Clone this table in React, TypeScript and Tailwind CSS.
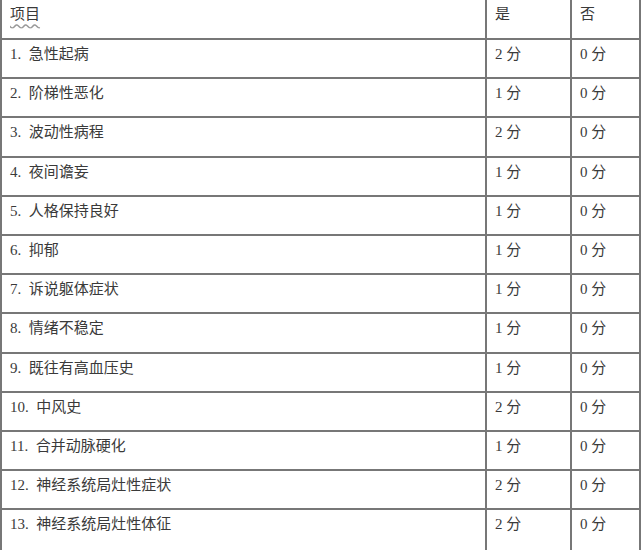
const rows = [
  ["1.  急性起病", "2 分", "0 分"],
  ["2.  阶梯性恶化", "1 分", "0 分"],
  ["3.  波动性病程", "2 分", "0 分"],
  ["4.  夜间谵妄", "1 分", "0 分"],
  ["5.  人格保持良好", "1 分", "0 分"],
  ["6.  抑郁", "1 分", "0 分"],
  ["7.  诉说躯体症状", "1 分", "0 分"],
  ["8.  情绪不稳定", "1 分", "0 分"],
  ["9.  既往有高血压史", "1 分", "0 分"],
  ["10.  中风史", "2 分", "0 分"],
  ["11.  合并动脉硬化", "1 分", "0 分"],
  ["12.  神经系统局灶性症状", "2 分", "0 分"],
  ["13.  神经系统局灶性体征", "2 分", "0 分"],
];

const font = "font-['Liberation_Serif','Noto_Sans_CJK_SC',serif]";

export default function App() {
  return (
    <div className={`w-[641px] h-[550px] overflow-hidden bg-white text-[15px] text-[#3a3a3a] ${font}`}>
      <div className="grid grid-cols-[483px_85px_71px] border-l-2 border-[#777] h-[40px] border-b-2">
        <div className="pl-2 pt-[3px]">
          <span className="underline decoration-wavy decoration-[#999] underline-offset-4">项目</span>
        </div>
        <div className="border-l-2 border-[#777] pl-2 pt-[3px]">是</div>
        <div className="border-l-2 border-r-2 border-[#777] pl-2 pt-[3px]">否</div>
      </div>
      {rows.map((r, i) => (
        <div
          key={i}
          className="grid grid-cols-[483px_85px_71px] border-l-2 border-b-2 border-[#777] h-[39.2px] last:h-[45px]"
        >
          <div className="pl-2 pt-[3px] whitespace-pre">{r[0]}</div>
          <div className="border-l-2 border-[#777] pl-2 pt-[3px]">{r[1]}</div>
          <div className="border-l-2 border-r-2 border-[#777] pl-2 pt-[3px]">{r[2]}</div>
        </div>
      ))}
    </div>
  );
}
